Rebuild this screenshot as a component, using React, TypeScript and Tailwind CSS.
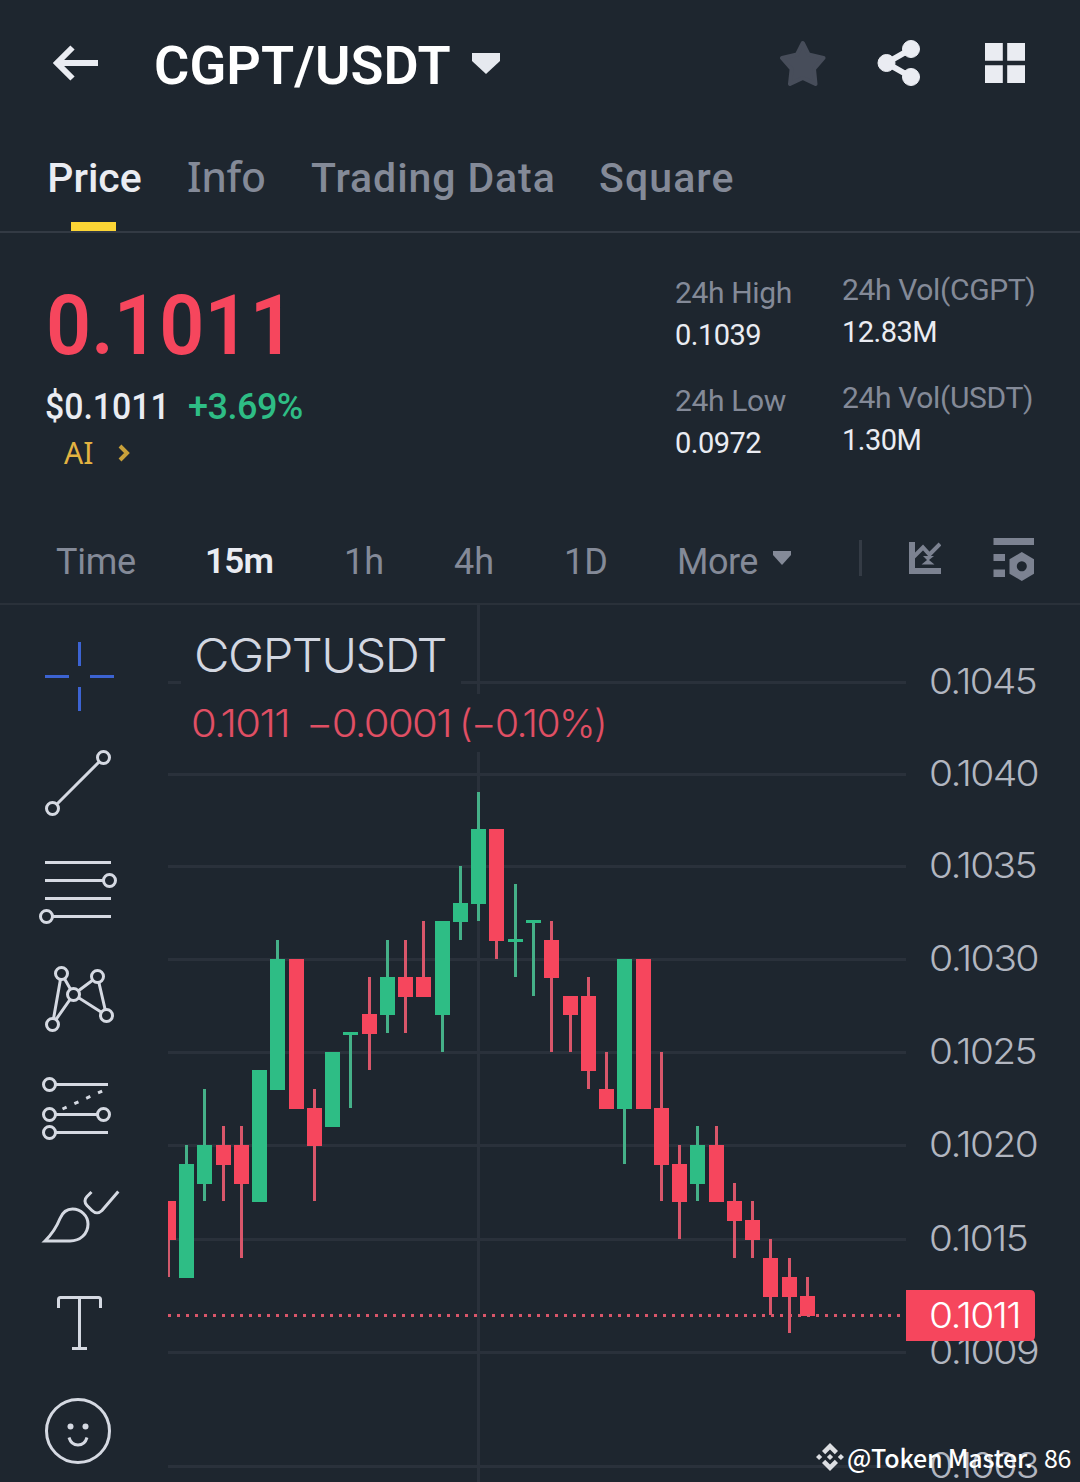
import type { ReactNode } from "react";

type Candle = [x: number, up: 0 | 1, top: number, bottom: number, high: number, low: number];

const candles: Candle[] = [
  [186.5, 1, 1164, 1278, 1145, 1278],
  [204.5, 1, 1145, 1184, 1089, 1201],
  [223.5, 0, 1145, 1165, 1126, 1201],
  [241.5, 0, 1145, 1184, 1126, 1258],
  [259.5, 1, 1070, 1202, 1070, 1202],
  [277.5, 1, 959, 1090, 940, 1090],
  [296.5, 0, 959, 1109, 959, 1109],
  [314.5, 0, 1108, 1146, 1089, 1201],
  [332.5, 1, 1052, 1127, 1052, 1127],
  [350.5, 1, 1032, 1035, 1032, 1108],
  [369.5, 0, 1014, 1034, 977, 1070],
  [387.5, 1, 977, 1015, 940, 1033],
  [405.5, 0, 977, 997, 940, 1033],
  [423.5, 0, 977, 997, 921, 997],
  [442.5, 1, 921, 1015, 921, 1052],
  [460.5, 1, 903, 922, 866, 940],
  [478.5, 1, 829, 904, 792, 921],
  [496.5, 0, 829, 941, 829, 959],
  [515.5, 1, 939, 942, 884, 977],
  [533.5, 1, 920, 923, 920, 996],
  [551.5, 0, 940, 978, 921, 1052],
  [570.5, 0, 996, 1015, 996, 1052],
  [588.5, 0, 996, 1071, 977, 1089],
  [606.5, 0, 1089, 1109, 1052, 1109],
  [624.5, 1, 959, 1109, 959, 1164],
  [643.5, 0, 959, 1109, 959, 1109],
  [661.5, 0, 1108, 1165, 1052, 1201],
  [679.5, 0, 1164, 1202, 1145, 1239],
  [697.5, 1, 1145, 1184, 1126, 1201],
  [716.5, 0, 1145, 1202, 1126, 1202],
  [734.5, 0, 1201, 1221, 1183, 1258],
  [752.5, 0, 1220, 1240, 1201, 1258],
  [770.5, 0, 1258, 1297, 1239, 1315],
  [789.5, 0, 1277, 1297, 1258, 1333],
  [807.5, 0, 1296, 1316, 1277, 1316],
];

const axis: [label: string, line: number, baseline: number, width: number][] = [
  ["0.1045", 682.5, 694, 105],
  ["0.1040", 774.5, 786, 107],
  ["0.1035", 866.5, 878, 105],
  ["0.1030", 959.5, 971, 107],
  ["0.1025", 1052.5, 1064, 105],
  ["0.1020", 1145.5, 1157, 106],
  ["0.1015", 1239.5, 1251, 96],
  ["0.1009", 1352.5, 1364, 107],
  ["0.1003", 1466.5, 1478, 107],
];

function Header() {
  return (
    <header className="flex h-[130px] items-center pb-[4px] pl-[53px] pr-[55px]">
      <svg className="h-[36px] w-[45px] shrink-0" viewBox="53 45 45 36" fill="none" stroke="#eaecf2" strokeWidth="6">
        <path d="M98 63H58M72.5 47.5 57 63l15.500 15.500" />
      </svg>
      <h1 className="ml-[56px] w-[299px] whitespace-nowrap pt-[5px] text-[54px] font-semibold leading-[60px] tracking-[0.100px] text-white">CGPT/USDT</h1>
      <svg className="ml-[19px] h-[21px] w-[28px] shrink-0" viewBox="0 0 28 21" fill="#e6e9ef">
        <path d="M0 0h28v8L14 21 0 8z" />
      </svg>
      <div className="ml-auto flex items-center">
        <svg className="h-[48px] w-[46px]" viewBox="780 39.500 46 48" fill="#474d5a" stroke="#474d5a" strokeWidth="4" strokeLinejoin="round">
          <path d="M802.800 43.500 808.500 55 823.500 58.500 814 69.500 815.500 84.500 802.800 78.500 790 84.500 791.600 69.500 782 58.500 797 55z" />
        </svg>
        <svg className="ml-[50px] h-[48px] w-[46px]" viewBox="876 39 46 48" fill="#eaecf2" stroke="#eaecf2">
          <path d="M911 49 886.500 63 911 77" fill="none" strokeWidth="6" />
          <circle cx="911" cy="49" r="8.500" />
          <circle cx="911" cy="77" r="8.500" />
          <circle cx="886.500" cy="63" r="8.500" />
        </svg>
        <svg className="ml-[63px] h-[40px] w-[40px]" viewBox="0 0 40 40" fill="#eaecf2">
          <path d="M0 0h17.800v17.800H0zM22.200 0H40v17.800H22.200zM0 22.200h17.800V40H0zM22.200 22.200H40V40H22.200z" />
        </svg>
      </div>
    </header>
  );
}

function Tabs() {
  return (
    <nav className="flex h-[103px] items-baseline border-b-2 border-[#333a44] pl-[45px] pt-[24px] text-[41px] font-medium leading-[47px] text-[#848a98]">
      <div className="flex w-[97px] flex-col items-center whitespace-nowrap text-[#eaecf2]">
        <span className="pl-[2px]">Price</span>
        <span className="mt-[20px] h-[9px] w-[45px] bg-[#fcd535]" />
      </div>
      <span className="ml-[45px] w-[84px] whitespace-nowrap font-['Noto_Sans'] leading-[44px] tracking-[-0.300px]">Info</span>
      <span className="ml-[40px] w-[248px] whitespace-nowrap tracking-[0.900px]">Trading Data</span>
      <span className="ml-[40px] whitespace-nowrap tracking-[1.100px]">Square</span>
    </nav>
  );
}

function Stat({ label, value }: { label: string; value: string }) {
  return (
    <div className="whitespace-nowrap leading-[30px]">
      <div className="text-[30px] tracking-[-0.350px] text-[#848a98]">{label}</div>
      <div className="mt-[12px] text-[29px] tracking-[-0.500px] text-[#eaecf2]">{value}</div>
    </div>
  );
}

function Summary() {
  return (
    <section className="flex h-[282px] pl-[45px]">
      <div className="w-[630px] pt-[51px]">
        <div className="w-fit origin-left scale-x-[0.94] pl-[1px] text-[84px] font-semibold leading-[84px] tracking-[0.200px] text-[#f6465d]">0.1011</div>
        <div className="mt-[19px] flex text-[36px] font-medium leading-[40px]">
          <span className="w-[142px] origin-left scale-x-[0.94] text-[#eaecf2]">$0.1011</span>
          <span className="pl-[1px] tracking-[-0.500px] text-[#2ebd85]">+3.69%</span>
        </div>
        <div className="mt-[11px] flex items-center pl-[19px] text-[#e3b341]">
          <span className="w-[53px] font-['Noto_Sans'] text-[30px] leading-[30px]">AI</span>
          <svg className="h-[18px] w-[14px]" viewBox="0 0 14 18" fill="none" stroke="#c9a13a" strokeWidth="4">
            <path d="M3 2l7 7-7 7" />
          </svg>
        </div>
      </div>
      <div className="flex w-[167px] flex-col gap-[36px] pt-[45px]">
        <Stat label="24h High" value="0.1039" />
        <Stat label="24h Low" value="0.0972" />
      </div>
      <div className="flex flex-col gap-[36px] pt-[42px]">
        <Stat label="24h Vol(CGPT)" value="12.83M" />
        <Stat label="24h Vol(USDT)" value="1.30M" />
      </div>
    </section>
  );
}

function Intervals() {
  return (
    <nav className="flex h-[88px] items-center whitespace-nowrap pl-[56px] pt-[5px] text-[36px] leading-[40px] text-[#848a98]">
      <span className="w-[149px] tracking-[-0.300px]">Time</span>
      <span className="w-[139px] text-[35px] font-semibold tracking-[-0.800px] text-[#eaecf2]">15m</span>
      <span className="w-[110px]">1h</span>
      <span className="w-[110px]">4h</span>
      <span className="w-[113px]">1D</span>
      <span className="w-[96px] tracking-[-0.500px]">More</span>
      <svg className="mb-[7px] h-[14px] w-[18px] shrink-0" viewBox="0 0 18 14" fill="#848a98">
        <path d="M0 0h18v4l-9 10L0 4z" />
      </svg>
      <span className="mb-[7px] ml-[68px] h-[36px] w-[3px] shrink-0 bg-[#343b45]" />
      <svg className="mb-[7px] ml-[47px] h-[32px] w-[32px] shrink-0" viewBox="909 542 32 32" fill="#7c8291">
        <path d="M909 542h6v26h26v6h-32z" />
        <path d="M913 557.500l10-10 6.500 7L940 544" fill="none" stroke="#7c8291" strokeWidth="4" />
        <path d="M923 556h11l-5 4 5.500 4.500h-13L927 560z" />
      </svg>
      <svg className="mb-[4px] ml-[52px] h-[43px] w-[41px] shrink-0" viewBox="993 538 41 43" fill="#7c8291">
        <path d="M993.500 538H1034v7h-40.500zM993.500 554H1005v7h-11.500zM993.500 569.500H1005v7.500h-11.500z" />
        <path fillRule="evenodd" d="M1021.800 552l12.300 7.200v14.600l-12.300 7.200-12.300-7.200v-14.600zM1021.800 561.300a5 5 0 1 0 .01 0z" />
      </svg>
    </nav>
  );
}

function Tool({ y, h = 108, color = "#d5d9e2", children }: { y: number; h?: number; color?: string; children: ReactNode }) {
  return (
    <svg width="168" height={h} viewBox={`0 ${y} 168 ${h}`} fill="none" stroke={color} strokeWidth="3">
      {children}
    </svg>
  );
}

function Node({ x, y }: { x: number; y: number }) {
  return <circle cx={x} cy={y} r="6" fill="#1e262f" />;
}

function Toolbar() {
  return (
    <aside className="flex w-[168px] shrink-0 flex-col pt-[17px]">
      <Tool y={622} color="#3c63d2">
        <path d="M79.500 642v24M79.500 687v24M45 676.500h24M90 676.500h24" />
      </Tool>
      <Tool y={730}>
        <path d="M52.500 808.500l51-51" />
        <Node x={52.5} y={808.5} />
        <Node x={103.5} y={757.5} />
      </Tool>
      <Tool y={838}>
        <path d="M45 862.500h66M45 880.500h60M45 898.500h66M50 916.500h61" />
        <Node x={109.5} y={880.5} />
        <Node x={46.5} y={916.5} />
      </Tool>
      <Tool y={946}>
        <path d="M52.500 1024.500l9-51 12 21-21 30M106.500 1015.500l-33-21 24-18z" />
        <Node x={61.5} y={973.5} />
        <Node x={97.5} y={976.5} />
        <Node x={73.5} y={994.5} />
        <Node x={106.5} y={1015.5} />
        <Node x={52.5} y={1024.5} />
      </Tool>
      <Tool y={1054}>
        <path d="M52 1084.500h56M52 1114.500h50M52 1132.500h56" />
        <path d="M62.500 1109l42-19" strokeDasharray="4.500 8.500" />
        <Node x={49.5} y={1084.5} />
        <Node x={49.5} y={1114.5} />
        <Node x={103.5} y={1114.5} />
        <Node x={49.5} y={1132.5} />
      </Tool>
      <Tool y={1162}>
        <path d="M45 1241C53 1233 57 1226 60 1218.500 62.500 1212.500 66.500 1209 72.500 1209 81 1209 88 1216 88 1224 88 1234 80 1241 70 1241z" />
        <path d="M91.500 1192l-4.500 4.500c-2.700 2.700-2.700 6.300 0 9l5 5c3 3 7 3 10 0L118.300 1191.500" />
      </Tool>
      <Tool y={1270}>
        <path d="M58.500 1308v-8.500q0-2 2-2h38q2 0 2 2v8.500M79.500 1298v51M72 1348.500h15" />
      </Tool>
      <Tool y={1378} h={104}>
        <circle cx="78" cy="1431" r="31.500" />
        <path d="M69 1437.500c1.500 5 5 7.500 9 7.500s7.500-2.500 9-7.500" />
        <circle cx="70.500" cy="1426.500" r="3" fill="#d5d9e2" stroke="none" />
        <circle cx="85.500" cy="1426.500" r="3" fill="#d5d9e2" stroke="none" />
      </Tool>
    </aside>
  );
}

function Chart() {
  return (
    <svg width="912" height="877" viewBox="168 605 912 877" className="block font-[Inter] font-light tracking-[-1.500px]">
      <g stroke="#2a313b" strokeWidth="3">
        {axis.map(([label, y]) => (
          <path key={label} d={`M168 ${y}H906`} />
        ))}
        <path d="M478.500 605V1482" />
      </g>
      <rect x="181" y="630" width="280" height="60" fill="#1e262f" />
      <rect x="181" y="694" width="440" height="58" fill="#1e262f" />
      <text x="194" y="672" fontSize="47" fill="#d3d7e1" textLength="252" lengthAdjust="spacingAndGlyphs">CGPTUSDT</text>
      <g fontSize="38" fill="#e04f64">
        <text x="191" y="737" textLength="98" lengthAdjust="spacingAndGlyphs">0.1011</text>
        <text x="306" y="737" textLength="145" lengthAdjust="spacingAndGlyphs">−0.0001</text>
        <text x="459" y="737" textLength="147" lengthAdjust="spacingAndGlyphs">(−0.10%)</text>
      </g>
      <path d="M169 1201V1277" stroke="#d05a6c" strokeWidth="2" />
      <rect x="168" y="1201" width="8" height="39" fill="#f6465d" />
      {candles.map(([x, up, top, bottom, high, low]) => (
        <g key={x}>
          <rect x={x - 1.5} y={high} width="3" height={low - high} fill={up ? "#45b088" : "#d9566a"} />
          <rect x={x - 7.5} y={top} width="15" height={bottom - top} fill={up ? "#2ebd85" : "#f6465d"} />
        </g>
      ))}
      <path d="M168 1315.500H905" stroke="#d9566a" strokeWidth="3" strokeDasharray="3 6" />
      <g fontSize="36" fill="#b2b6c0">
        {axis.map(([label, , y, w]) => (
          <text key={label} x="929" y={y} textLength={w + 2} lengthAdjust="spacingAndGlyphs">{label}</text>
        ))}
      </g>
      <path d="M906 1290h124q5 0 5 5v41q0 5-5 5H906z" fill="#f6465d" />
      <text x="929" y="1328" fontSize="36" fill="#ffffff" textLength="91" lengthAdjust="spacingAndGlyphs">0.1011</text>
    </svg>
  );
}

function Watermark() {
  return (
    <div className="absolute bottom-[7px] left-[816px] flex items-center whitespace-pre font-['Noto_Sans_CJK_SC',sans-serif] text-[25px] font-normal leading-[36px] text-white">
      <svg className="mr-[3px] h-[28px] w-[28px]" viewBox="0 0 28 28" fill="#dcdee2">
        <path d="M14 0l8 8-3.200 3.200L14 6.400l-4.800 4.800L6 8zM14 28l8-8-3.200-3.200-4.800 4.800-4.800-4.800L6 20zM0 14l3.100-3.100L6.200 14l-3.100 3.100zM21.800 14l3.100-3.100L28 14l-3.100 3.100zM14 10.900l3.100 3.100-3.100 3.100-3.100-3.100z" />
      </svg>
      <span className="w-[197px] font-medium tracking-[-0.200px]">@Token Master.</span>
      <span className="tracking-[-0.500px]">86</span>
    </div>
  );
}

export default function App() {
  return (
    <main className="relative flex h-[1482px] w-[1080px] flex-col overflow-hidden bg-[#1e262f] font-[Roboto,sans-serif]">
      <Header />
      <Tabs />
      <Summary />
      <Intervals />
      <section className="flex h-[879px] border-t-2 border-[#2a313a]">
        <Toolbar />
        <Chart />
      </section>
      <Watermark />
    </main>
  );
}
